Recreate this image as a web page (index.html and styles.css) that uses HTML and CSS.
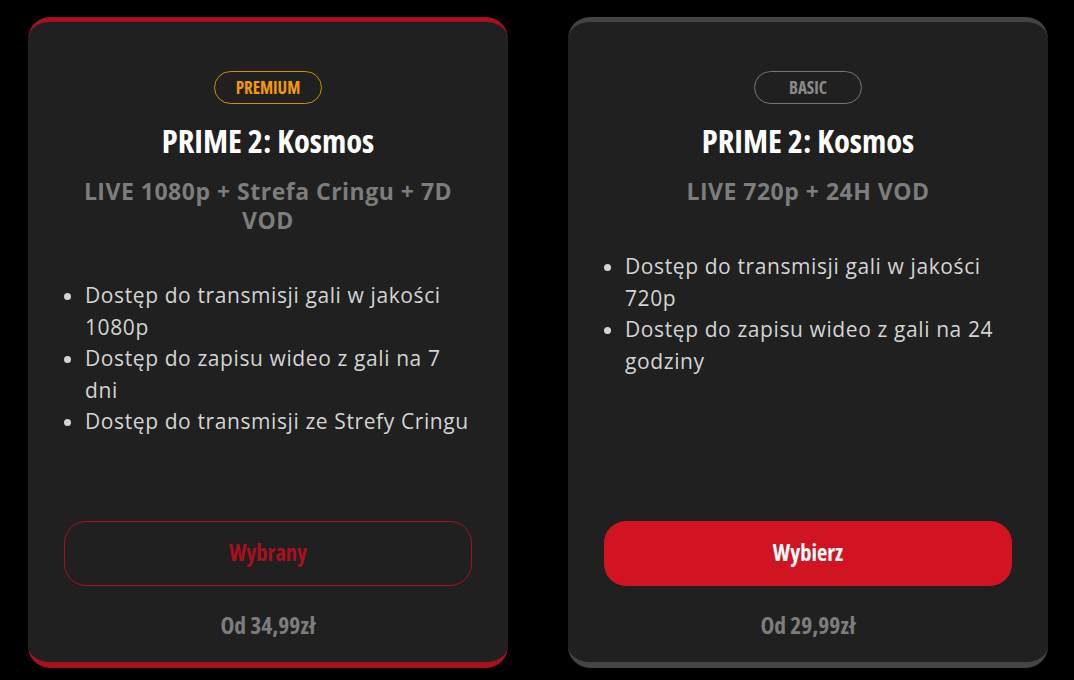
FILE: index.html
```html
<!DOCTYPE html>
<html lang="pl">
<head>
<meta charset="utf-8">
<title>Pakiety</title>
<link rel="stylesheet" href="styles.css">
</head>
<body>
<main class="plans">
  <section class="card card--premium">
    <span class="badge badge--premium">PREMIUM</span>
    <h2 class="title">PRIME 2: Kosmos</h2>
    <p class="subtitle">LIVE 1080p + Strefa Cringu + 7D VOD</p>
    <ul class="features">
      <li>Dostęp do transmisji gali w jakości 1080p</li>
      <li>Dostęp do zapisu wideo z gali na 7 dni</li>
      <li>Dostęp do transmisji ze Strefy Cringu</li>
    </ul>
    <button class="btn btn--selected">Wybrany</button>
    <p class="price">Od 34,99zł</p>
  </section>
  <section class="card card--basic">
    <span class="badge badge--basic">BASIC</span>
    <h2 class="title">PRIME 2: Kosmos</h2>
    <p class="subtitle">LIVE 720p + 24H VOD</p>
    <ul class="features">
      <li>Dostęp do transmisji gali w jakości 720p</li>
      <li>Dostęp do zapisu wideo z gali na 24 godziny</li>
    </ul>
    <button class="btn btn--choose">Wybierz</button>
    <p class="price">Od 29,99zł</p>
  </section>
</main>
</body>
</html>
```
FILE: styles.css
```css
* { box-sizing: border-box; }
html, body { margin: 0; padding: 0; background: #000; }
body {
  font-family: "Open Sans", "Noto Sans", sans-serif;
  width: 1074px;
  height: 680px;
  overflow: hidden;
}
.plans {
  display: flex;
  gap: 60px;
  padding: 17px 0 12px 28px;
  align-items: stretch;
  height: 680px;
}
.card {
  flex: 0 0 480px;
  width: 480px;
  background: #202020;
  border-radius: 22px;
  border-top: 5px solid;
  border-bottom: 6px solid;
  padding: 49px 36px 23px;
  display: flex;
  flex-direction: column;
  align-items: center;
}
.card--premium { border-color: #a8101e; }
.card--basic { border-color: #444444; }
.badge, .title, .btn, .price {
  font-family: "Open Sans", "Noto Sans", sans-serif;
  font-stretch: 75%;
  font-weight: 700;
}
.badge {
  display: inline-flex;
  align-items: center;
  justify-content: center;
  width: 108px;
  height: 33px;
  border-radius: 17px;
  border: 1px solid;
  font-size: 17px;
  line-height: 1;
}
.badge--premium { color: #f59a00; border-color: #d88a00; }
.badge--basic { color: #8a8a8a; border-color: #777; }
.title {
  margin: 17px 0 0;
  color: #fff;
  font-size: 32.5px;
  line-height: 40px;
}
.subtitle {
  margin: 16px 0 0;
  color: #7d7d7d;
  font-weight: 700;
  font-size: 23px;
  letter-spacing: 0.5px;
  line-height: 29px;
  text-align: center;
}
.features {
  align-self: stretch;
  margin: 45px 0 0;
  padding-left: 21px;
  color: #d4d4d4;
  font-size: 21px;
  letter-spacing: 0.6px;
  line-height: 31.5px;
}
.btn {
  margin-top: auto;
  align-self: stretch;
  flex: 0 0 65px;
  height: 65px;
  padding: 0 0 3px;
  border-radius: 22px;
  font-size: 22.5px;
  cursor: pointer;
}
.btn--selected { background: transparent; border: 1px solid #a8101e; color: #a8101e; }
.btn--choose { background: #d11422; border: none; color: #fff; }
.price {
  margin: 25px 0 0;
  color: #7d7d7d;
  font-size: 23.5px;
  line-height: 28px;
}
```
